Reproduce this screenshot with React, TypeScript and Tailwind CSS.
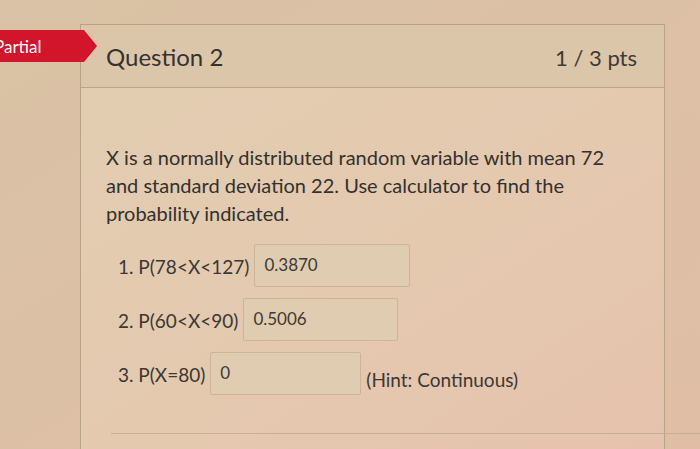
import React from "react";

const font = { fontFamily: "Lato, 'Noto Sans', sans-serif" };

function Row({ label, value, boxW, hint }: { label: string; value: string; boxW: string; hint?: string }) {
  return (
    <div className="flex items-center h-[43px] mb-[11px]">
      <span className="text-[19px] text-[#3b3833] leading-none pt-[2px]">{label}</span>
      <div className={`ml-[5px] h-[43px] ${boxW} border border-[#cbb699] bg-[#e0ccb0] rounded-[2px] flex items-start pt-[11px] pl-[9px]`}>
        <span className="text-[17px] text-[#3d3a36] leading-[18px]">{value}</span>
      </div>
      {hint && <span className="ml-[5px] mt-[14px] text-[19px] text-[#3b3833]">{hint}</span>}
    </div>
  );
}

export default function App() {
  return (
    <div
      className="w-[700px] h-[449px] overflow-hidden relative bg-gradient-to-br from-[#d9c2a5] to-[#e0bea6]"
      style={font}
    >
      <div className="absolute left-0 top-[30px] h-[32px] w-[97px] z-10 flex items-center">
        <div className="h-full w-[84px] bg-[#d3152c] flex items-center overflow-hidden">
          <span className="text-white text-[17px] ml-[-6px] leading-none">Partial</span>
        </div>
        <div className="w-0 h-0 border-t-[16px] border-b-[16px] border-l-[13px] border-t-transparent border-b-transparent border-l-[#d3152c]" />
      </div>
      <div className="ml-[80px] mt-[24px] w-[585px] h-[440px] border-l border-t border-r border-[#b9a386] flex flex-col">
        <div className="h-[63px] bg-[#dcc6aa] border-b border-[#bba588] flex items-center justify-between pl-[25px] pr-[27px]">
          <span className="text-[24px] text-[#35322e] pt-[2px]">Question 2</span>
          <span className="text-[22px] text-[#3e3a35] pt-[2px]">1 / 3 pts</span>
        </div>
        <div className="flex-1 bg-gradient-to-br from-[#e2cdb1] via-[#e4c9af] to-[#e6c2ad] pl-[25px] pt-[55px]">
          <p className="text-[20px] leading-[28px] text-[#34312d] w-[505px]">
            X is a normally distributed random variable with mean 72 and standard deviation 22. Use calculator to find the probability indicated.
          </p>
          <div className="pl-[12px] mt-[17px]">
            <Row label="1. P(78<X<127)" value="0.3870" boxW="w-[156px]" />
            <Row label="2. P(60<X<90)" value="0.5006" boxW="w-[155px]" />
            <Row label="3. P(X=80)" value="0" boxW="w-[151px]" hint="(Hint: Continuous)" />
          </div>
          <div className="mt-[38px] ml-[5px] border-t border-[#c6af93] w-[600px]" />
        </div>
      </div>
    </div>
  );
}
